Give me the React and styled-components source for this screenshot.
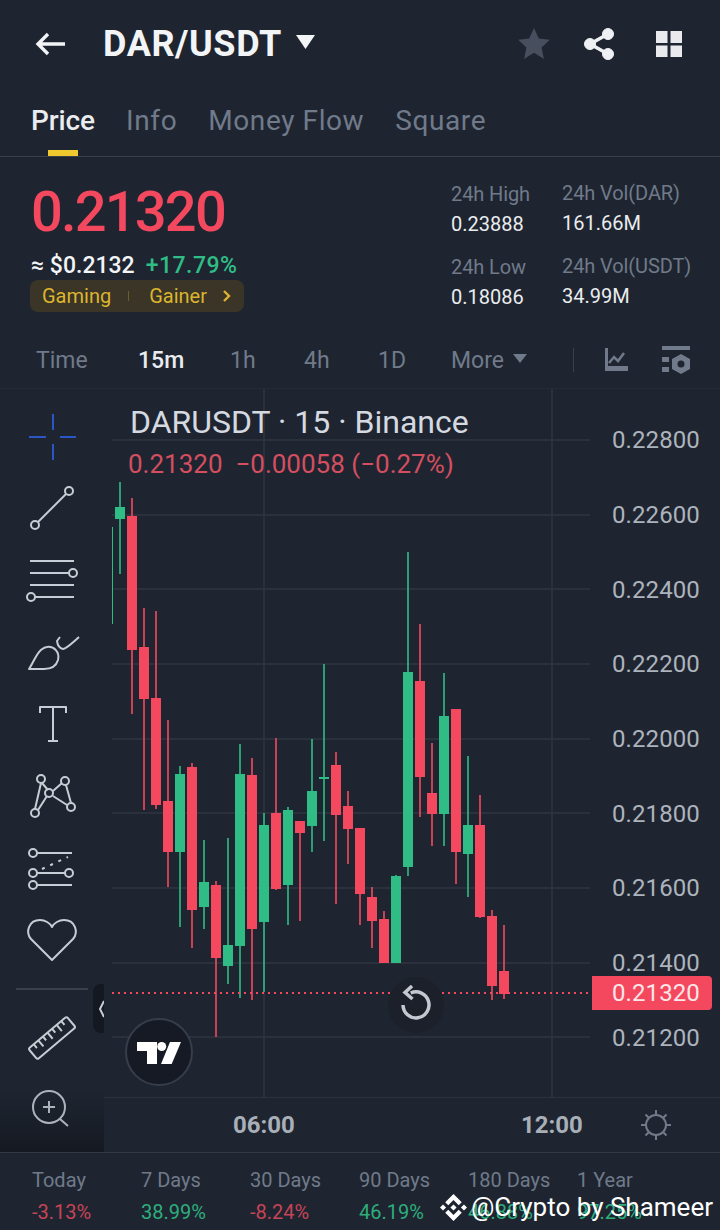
import styled, { createGlobalStyle } from 'styled-components';

const GREEN = '#2fbd85';
const RED = '#f4485f';

const GlobalStyle = createGlobalStyle`
  * {
    box-sizing: border-box;
  }

  html,
  body {
    margin: 0;
    background: #1e2530;
  }

  body {
    font-family: Roboto, 'Liberation Sans', sans-serif;
  }
`;

const Page = styled.div`
  width: 720px;
  height: 1230px;
  overflow: hidden;
  display: flex;
  flex-direction: column;
  background: #1e2530;
  color: #eaecef;
`;

const Header = styled.header`
  height: 88px;
  display: flex;
  align-items: center;
  padding: 0 38px 0 35px;
`;

const Symbol = styled.h1`
  margin: 0 0 0 38px;
  font-size: 36px;
  font-weight: 700;
  color: #f2f4f6;
  letter-spacing: 0.6px;
`;

const HeaderCaret = styled.svg`
  width: 20px;
  height: 16px;
  margin: 0 0 4px 14px;
`;

const HeaderActions = styled.div`
  margin-left: auto;
  display: flex;
  align-items: center;
  gap: 34px;
`;

const GridIcon = styled.svg`
  margin-left: 8px;
`;

const Tabs = styled.nav`
  height: 69px;
  display: flex;
  gap: 31px;
  padding: 13px 0 0 31px;
  border-bottom: 1px solid #3a404a;
`;

const Tab = styled.div`
  position: relative;
  height: 55px;
  font-size: 28px;
  line-height: 40px;
  font-weight: ${({ $active }) => ($active ? 500 : 400)};
  color: ${({ $active }) => ($active ? '#eaecef' : '#707a8a')};
  letter-spacing: ${({ $active }) => ($active ? '-0.1px' : '0.6px')};

  ${({ $active }) =>
    $active &&
    `
    &::after {
      content: '';
      position: absolute;
      left: 17px;
      bottom: 0;
      width: 30px;
      height: 6px;
      background: #f0c92e;
    }
  `}
`;

const Summary = styled.section`
  height: 173px;
  display: flex;
  justify-content: space-between;
`;

const PriceBlock = styled.div`
  padding: 20px 0 0 31px;
`;

const LastPrice = styled.div`
  font-size: 56px;
  line-height: 70px;
  font-weight: 500;
  color: ${RED};
  letter-spacing: -1.8px;
`;

const FiatRow = styled.div`
  display: flex;
  gap: 11px;
  margin-top: 4px;
  font-size: 23px;
  line-height: 30px;
`;

const Fiat = styled.span`
  font-weight: 500;
  color: #f2f4f6;
`;

const Change = styled.span`
  font-weight: 500;
  color: ${GREEN};
  letter-spacing: 0.5px;
`;

const TagChip = styled.div`
  display: flex;
  align-items: center;
  width: 214px;
  height: 32px;
  margin: -1px 0 0 -1px;
  padding-left: 12px;
  border-radius: 8px;
  background: #3a3526;
  font-size: 20px;
  color: #dcb42f;
`;

const ChipDivider = styled.span`
  width: 1px;
  height: 10px;
  margin: 0 20px 0 17px;
  background: #6a5e30;
`;

const Chevron = styled.svg`
  width: 10px;
  height: 12px;
  margin-left: 15px;
`;

const StatsGrid = styled.div`
  display: grid;
  grid-template-columns: 111px 158px;
  grid-auto-rows: 73px;
  padding-top: 25px;
`;

const Stat = styled.div`
  display: flex;
  flex-direction: column;
  gap: 7px;
  margin-top: ${({ $up }) => ($up ? '-1px' : '0')};
`;

const StatLabel = styled.span`
  font-size: 20px;
  line-height: 24px;
  color: #707a8a;
  white-space: nowrap;
  letter-spacing: -0.1px;
`;

const StatValue = styled.span`
  font-size: 20px;
  line-height: 22px;
  color: #eaecef;
`;

const Intervals = styled.div`
  height: 59px;
  display: flex;
  align-items: center;
  padding: 2px 28px 0 36px;
  border-bottom: 1px solid #262c36;
`;

const Interval = styled.span`
  width: ${({ $w }) => $w}px;
  font-size: 23px;
  font-weight: ${({ $active }) => ($active ? 500 : 400)};
  color: ${({ $active }) => ($active ? '#eaecef' : '#707a8a')};
`;

const MoreCaret = styled.svg`
  width: 14px;
  height: 11px;
  margin: 0 0 4px 9px;
`;

const IntervalDivider = styled.span`
  width: 1px;
  height: 24px;
  margin: 0 30px 0 46px;
  background: #3a404a;
`;

const IntervalIcons = styled.div`
  display: flex;
  align-items: center;
  gap: 33px;
`;

const Workspace = styled.div`
  height: 763px;
  display: flex;
  position: relative;
`;

const Sidebar = styled.aside`
  width: 104px;
  padding: 20px 0 0 24px;
  background: linear-gradient(to bottom, transparent 92%, #151922 100%);
`;

const Tool = styled.svg`
  display: block;
  width: 56px;
  height: 56px;
  margin-bottom: ${({ $gap }) => $gap || 0}px;
  fill: none;
  stroke: ${({ $color }) => $color || '#c8ccd4'};
  stroke-width: 2;
  stroke-linejoin: round;
`;

const ToolDivider = styled.div`
  width: 72px;
  height: 2px;
  margin: 20px 0 19px -8px;
  background: #3a404a;
`;

const CollapseHandle = styled.div`
  position: absolute;
  left: 93px;
  top: 595px;
  width: 11px;
  height: 49px;
  overflow: hidden;
  border-radius: 8px 0 0 8px;
  background: #141821;
`;

const ChartColumn = styled.div`
  flex: 1;
  position: relative;
  display: flex;
  flex-direction: column;
`;

const PlotRow = styled.div`
  height: 708px;
  display: flex;
`;

const Plot = styled.svg`
  display: block;
  width: 486px;
  height: 708px;
`;

const PriceAxis = styled.div`
  flex: 1;
  display: grid;
  grid-auto-rows: 74.67px;
  padding: 14px 0 0 22px;
  font-size: 24px;
  color: #adb3bc;
`;

const AxisTick = styled.div`
  display: flex;
  align-items: center;
  height: 74.67px;
  letter-spacing: 0.1px;
`;

const PriceTag = styled.div`
  position: absolute;
  left: 488px;
  top: 587px;
  width: 120px;
  height: 34px;
  padding-left: 20px;
  display: flex;
  align-items: center;
  border-radius: 0 4px 4px 0;
  background: ${RED};
  font-size: 24px;
  letter-spacing: 0.1px;
  color: #fbe6e9;
`;

const Legend = styled.div`
  position: absolute;
  left: 24px;
  top: 13px;
`;

const LegendTitle = styled.div`
  padding-left: 2px;
  font-size: 32px;
  line-height: 40px;
  color: #d5d9e0;
`;

const LegendValues = styled.div`
  margin-top: 2px;
  font-size: 26px;
  line-height: 40px;
  color: #d44e60;
  white-space: pre;
`;

const TvBadge = styled.div`
  position: absolute;
  left: 21px;
  top: 629px;
  width: 68px;
  height: 68px;
  display: flex;
  align-items: center;
  justify-content: center;
  padding-top: 2px;
  border-radius: 50%;
  border: 2px solid #373d4a;
  background: #151a24;
`;

const ResetButton = styled.div`
  position: absolute;
  left: 284px;
  top: 588px;
  width: 56px;
  height: 56px;
  display: flex;
  align-items: center;
  justify-content: center;
  border-radius: 50%;
  background: #1b202a;
`;

const TimeAxis = styled.div`
  flex: 1;
  display: flex;
  align-items: center;
  padding-left: 129px;
  border-top: 1px solid #2d333e;
  font-size: 24px;
  font-weight: 700;
  color: #a9afb8;
`;

const TimeLabel = styled.span`
  width: ${({ $w }) => $w}px;
`;

const Footer = styled.footer`
  position: relative;
  flex: 1;
  display: flex;
  padding: 16px 0 0 32px;
  border-top: 1px solid #343a45;
`;

const Period = styled.div`
  width: 109px;
  display: flex;
  flex-direction: column;
  gap: 9px;
  font-size: 20px;
  line-height: 23px;
`;

const PeriodLabel = styled.span`
  color: #707a8a;
`;

const PeriodValue = styled.span`
  color: ${({ $up }) => ($up ? GREEN : '#d9485c')};
  opacity: 0.9;
`;

const Watermark = styled.div`
  position: absolute;
  right: 7px;
  top: 39px;
  display: flex;
  align-items: center;
  gap: 4px;
  font-size: 26px;
  line-height: 30px;
  color: #fff;
`;

// x, wick top, wick bottom, body top, body bottom, up?
const candles = [
  [120, 482, 574, 507, 519, 1],
  [132, 498, 714, 516, 650, 0],
  [144, 608, 810, 647, 699, 0],
  [156, 611, 809, 698, 805, 0],
  [168, 720, 887, 801, 852, 0],
  [180, 766, 927, 774, 852, 1],
  [192, 763, 948, 767, 910, 0],
  [204, 840, 929, 882, 907, 1],
  [216, 881, 1037, 885, 958, 0],
  [228, 838, 984, 945, 966, 1],
  [240, 744, 998, 774, 946, 1],
  [252, 758, 1000, 775, 929, 0],
  [264, 813, 992, 825, 922, 1],
  [276, 738, 890, 813, 889, 0],
  [288, 807, 925, 810, 885, 1],
  [300, 821, 921, 821, 833, 0],
  [312, 739, 852, 791, 826, 1],
  [324, 664, 841, 777, 779, 1],
  [336, 752, 904, 765, 815, 0],
  [348, 791, 864, 806, 829, 0],
  [360, 828, 925, 828, 894, 0],
  [372, 887, 948, 897, 921, 0],
  [384, 911, 963, 919, 963, 0],
  [396, 875, 963, 876, 963, 1],
  [408, 552, 876, 672, 867, 1],
  [420, 624, 817, 681, 777, 0],
  [432, 743, 846, 793, 814, 0],
  [444, 673, 846, 716, 814, 1],
  [456, 709, 884, 709, 852, 0],
  [468, 756, 897, 825, 854, 1],
  [480, 795, 918, 825, 917, 0],
  [492, 910, 1000, 916, 986, 0],
  [504, 925, 999, 971, 994, 0],
];

const gridRows = [440, 515, 589, 664, 739, 813, 888, 963, 1037];
const axisPrices = ['0.22800', '0.22600', '0.22400', '0.22200', '0.22000', '0.21800', '0.21600', '0.21400', '0.21200'];

const periods = [
  ['Today', '-3.13%', false],
  ['7 Days', '38.99%', true],
  ['30 Days', '-8.24%', false],
  ['90 Days', '46.19%', true],
  ['180 Days', '46.88%', true],
  ['1 Year', '97.25%', true],
];

const CandleChart = () => (
  <Plot viewBox="104 389 486 708">
    {gridRows.map((y) => (
      <line key={y} x1="112" x2="590" y1={y} y2={y} stroke="#2b313c" strokeWidth="2" />
    ))}
    <line x1="264" x2="264" y1="389" y2="1097" stroke="#2f3541" strokeWidth="1.5" />
    <line x1="552" x2="552" y1="389" y2="1097" stroke="#2f3541" strokeWidth="1.5" />
    <line x1="112.5" x2="112.5" y1="527" y2="624" stroke={GREEN} strokeWidth="1" />
    {candles.map(([x, high, low, top, bottom, up]) => (
      <g key={x} fill={up ? GREEN : RED}>
        <rect x={x - 1} y={high} width="2" height={low - high} opacity="0.8" />
        <rect x={x - 5} y={top} width="10" height={bottom - top} />
      </g>
    ))}
    <line x1="112" x2="590" y1="993" y2="993" stroke={RED} strokeWidth="2" strokeDasharray="2 4" />
  </Plot>
);

const App = () => (
  <Page>
    <GlobalStyle />
    <Header>
      <svg width="30" height="24" viewBox="0 0 30 24" fill="none" stroke="#f2f4f6" strokeWidth="3.4">
        <path d="M30 12H3M13 2 3 12l10 10" />
      </svg>
      <Symbol>DAR/USDT</Symbol>
      <HeaderCaret viewBox="0 0 20 16">
        <path d="M0 1h19l-9.5 14z" fill="#f2f4f6" />
      </HeaderCaret>
      <HeaderActions>
        <svg width="32" height="32" viewBox="0 0 32 32">
          <path d="M16 0l4.800 10.600 11 1.200-8.200 7.600 2.300 11.600L16 24.800 6.100 31l2.300-11.600-8.200-7.600 11-1.200z" fill="#474e5d" />
        </svg>
        <svg width="30" height="32" viewBox="0 0 30 32" fill="#eef0f3" stroke="#eef0f3">
          <circle cx="24" cy="6" r="5.500" />
          <circle cx="6" cy="16" r="5.500" />
          <circle cx="24" cy="26" r="5.500" />
          <path d="M24 6 6 16l18 10" fill="none" strokeWidth="3.500" />
        </svg>
        <GridIcon width="26" height="26" viewBox="0 0 26 26" fill="#e8eaee">
          <rect width="11.500" height="12" />
          <rect x="14.500" width="11.500" height="12" />
          <rect y="14.500" width="11.500" height="11.500" />
          <rect x="14.500" y="14.500" width="11.500" height="11.500" />
        </GridIcon>
      </HeaderActions>
    </Header>

    <Tabs>
      <Tab $active>Price</Tab>
      <Tab>Info</Tab>
      <Tab>Money Flow</Tab>
      <Tab>Square</Tab>
    </Tabs>

    <Summary>
      <PriceBlock>
        <LastPrice>0.21320</LastPrice>
        <FiatRow>
          <Fiat>≈ $0.2132</Fiat>
          <Change>+17.79%</Change>
        </FiatRow>
        <TagChip>
          <span>Gaming</span>
          <ChipDivider />
          <span>Gainer</span>
          <Chevron viewBox="0 0 10 12">
            <path d="M2 1l5 5-5 5" fill="none" stroke="#dcb42f" strokeWidth="2.400" />
          </Chevron>
        </TagChip>
      </PriceBlock>
      <StatsGrid>
        <Stat>
          <StatLabel>24h High</StatLabel>
          <StatValue>0.23888</StatValue>
        </Stat>
        <Stat $up>
          <StatLabel>24h Vol(DAR)</StatLabel>
          <StatValue>161.66M</StatValue>
        </Stat>
        <Stat>
          <StatLabel>24h Low</StatLabel>
          <StatValue>0.18086</StatValue>
        </Stat>
        <Stat $up>
          <StatLabel>24h Vol(USDT)</StatLabel>
          <StatValue>34.99M</StatValue>
        </Stat>
      </StatsGrid>
    </Summary>

    <Intervals>
      <Interval $w={102}>Time</Interval>
      <Interval $w={92} $active>15m</Interval>
      <Interval $w={74}>1h</Interval>
      <Interval $w={74}>4h</Interval>
      <Interval $w={73}>1D</Interval>
      <span>
        <Interval>More</Interval>
        <MoreCaret viewBox="0 0 14 11">
          <path d="M0 1h14L7 10z" fill="#707a8a" />
        </MoreCaret>
      </span>
      <IntervalDivider />
      <IntervalIcons>
        <svg width="24" height="24" viewBox="0 0 24 24" fill="#707a8a">
          <path d="M1 0h3v18h20v5H1z" />
          <path d="M5 15l5-6 4 4 6-8" fill="none" stroke="#707a8a" strokeWidth="2.500" />
        </svg>
        <svg width="30" height="28" viewBox="0 0 30 28" fill="#707a8a">
          <rect x="1" width="28" height="4" />
          <rect x="1" y="11" width="7" height="5" />
          <rect x="1" y="21" width="7" height="5" />
          <path d="M20 8l9 5v10l-9 5-9-5V13z" />
          <circle cx="20" cy="18" r="3.500" fill="#1e2530" />
        </svg>
      </IntervalIcons>
    </Intervals>

    <Workspace>
      <Sidebar>
        <Tool $gap={18} $color="#2b56c4" viewBox="0 0 56 56">
          <path d="M29 5v16M29 35v16M5 28h17M36 28h16" />
        </Tool>
        <Tool $gap={12} viewBox="0 0 56 56">
          <circle cx="45" cy="8" r="4" />
          <circle cx="11" cy="42" r="4" />
          <path d="M42 11 14 39" />
        </Tool>
        <Tool $gap={15} viewBox="0 0 56 56">
          <path d="M6 10h44M6 22h39M6 34h44M11 46h39" />
          <circle cx="49" cy="22" r="4" />
          <circle cx="7" cy="46" r="4" />
        </Tool>
        <Tool $gap={16} viewBox="0 0 56 56">
          <path d="M5 47C10 40 14 26 23 25c7-1 13 5 11 13-2 7-8 9-14 9z" />
          <path d="M36 15l-3 4q1 7 6 8q3 0 16-12" />
        </Tool>
        <Tool $gap={17} viewBox="0 0 56 56">
          <path d="M16 19v-6h26v6M29 13v34M24 47h10" />
        </Tool>
        <Tool $gap={17} viewBox="0 0 56 56">
          <path d="M17 16 11 42M14 43 23 29M18 16l6 7M29 24l9-8M42 18l5 18M29 29l14 9" />
          <circle cx="17" cy="12" r="4" />
          <circle cx="41" cy="14" r="4" />
          <circle cx="25" cy="26" r="4" />
          <circle cx="11" cy="46" r="4" />
          <circle cx="47" cy="40" r="4" />
        </Tool>
        <Tool $gap={16} viewBox="0 0 56 56">
          <circle cx="9" cy="13" r="4" />
          <circle cx="9" cy="33" r="4" />
          <circle cx="45" cy="33" r="4" />
          <circle cx="9" cy="45" r="4" />
          <path d="M13 13h35M13 33h28M13 45h35" />
          <path d="M18 29 44 17" strokeDasharray="3 6" />
        </Tool>
        <Tool viewBox="0 0 56 56">
          <path d="M28 48 7 27C1 20 5 8 16 8c5 0 10 3 12 7 2-4 7-7 12-7 11 0 15 12 9 19z" />
        </Tool>
        <ToolDivider />
        <Tool $gap={14} viewBox="0 0 56 56">
          <g transform="rotate(-40 28 29)">
            <rect x="3" y="22" width="50" height="14" rx="2" />
            <path d="M10 22v5M16 22v8M22 22v5M28 22v8M34 22v5M40 22v8M46 22v5" />
          </g>
        </Tool>
        <Tool $color="#aeb3bb" viewBox="0 0 56 56">
          <circle cx="25" cy="28" r="16" />
          <path d="M25 22v12M19 28h12M36 40l8 7" />
        </Tool>
      </Sidebar>
      <CollapseHandle>
        <svg width="11" height="49" viewBox="0 0 11 49">
          <path d="M11 17 7 25l4 8" fill="none" stroke="#c8ccd4" strokeWidth="2" />
        </svg>
      </CollapseHandle>
      <ChartColumn>
        <PlotRow>
          <CandleChart />
          <PriceAxis>
            {axisPrices.map((price) => (
              <AxisTick key={price}>{price}</AxisTick>
            ))}
          </PriceAxis>
        </PlotRow>
        <TimeAxis>
          <TimeLabel $w={288}>06:00</TimeLabel>
          <TimeLabel $w={120}>12:00</TimeLabel>
          <svg width="30" height="30" viewBox="0 0 30 30" fill="none" stroke="#707a8a" strokeWidth="2">
            <circle cx="15" cy="15" r="10" />
            <path d="M15 0v5M15 25v5M0 15h5M25 15h5M4.500 4.500l3 3M22.500 22.500l3 3M4.500 25.500l3-3M22.500 7.500l3-3" />
          </svg>
        </TimeAxis>
        <Legend>
          <LegendTitle>DARUSDT · 15 · Binance</LegendTitle>
          <LegendValues>0.21320  −0.00058 (−0.27%)</LegendValues>
        </Legend>
        <TvBadge>
          <svg width="44" height="22" viewBox="0 0 44 22" fill="#fff">
            <path d="M0 0h20v22H10V9H0z" />
            <circle cx="24.700" cy="4.500" r="4.500" />
            <path d="M33 0h11l-9.300 22H24z" />
          </svg>
        </TvBadge>
        <ResetButton>
          <svg width="40" height="40" viewBox="0 0 40 40" fill="none" stroke="#c4c8cf" strokeWidth="3.500">
            <path d="M14.700 8A13 13 0 1 1 7 20" />
            <path d="M16 1 9 7.500 16.500 14" />
          </svg>
        </ResetButton>
        <PriceTag>0.21320</PriceTag>
      </ChartColumn>
    </Workspace>

    <Footer>
      {periods.map(([label, value, up]) => (
        <Period key={label}>
          <PeriodLabel>{label}</PeriodLabel>
          <PeriodValue $up={up}>{value}</PeriodValue>
        </Period>
      ))}
      <Watermark>
        <svg width="27" height="27" viewBox="0 0 32 32" fill="#fff">
          <path d="M9.800 13.450 16 7.250l6.200 6.200 3.600-3.600L16 0 6.200 9.800zM0 16l3.600-3.600L7.200 16l-3.600 3.600zm9.800 2.550L16 24.750l6.200-6.200 3.600 3.600L16 32l-9.800-9.800zM24.800 16l3.600-3.600L32 16l-3.600 3.600zM19.650 16 16 12.350 12.350 16 16 19.650z" />
        </svg>
        <span>@Crypto by Shameer</span>
      </Watermark>
    </Footer>
  </Page>
);

export default App;
